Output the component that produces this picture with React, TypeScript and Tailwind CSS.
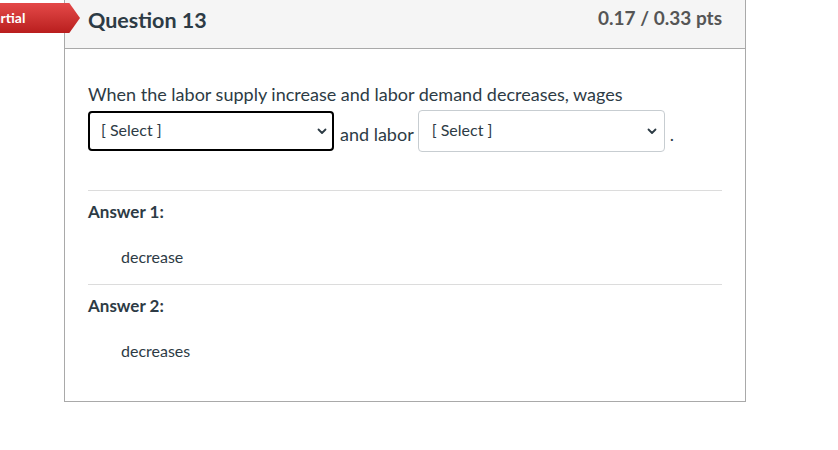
// Quiz question review card · partial credit
const FONT = { fontFamily: "Lato, 'Noto Sans', sans-serif" };

function Chevron() {
  return (
    <svg width="12" height="12" viewBox="0 0 12 12" className="shrink-0">
      <path d="M2.5 4.5 L6 8 L9.5 4.5" fill="none" stroke="#2d3b45" strokeWidth="1.8" strokeLinecap="round" strokeLinejoin="round" />
    </svg>
  );
}

function FakeSelect({ focused }: { focused?: boolean }) {
  return (
    <div
      className={
        focused
          ? "w-[246px] h-[40px] rounded-[4px] border-2 border-black flex items-center justify-between pl-[11px] pr-[4px] bg-white"
          : "w-[247px] h-[42px] rounded-[4px] border border-[#c7cdd1] flex items-center justify-between pl-[13px] pr-[6px] bg-white"
      }
    >
      <span className="text-[16px] text-[#2d3b45] -mt-[3px]">[ Select ]</span>
      <Chevron />
    </div>
  );
}

function AnswerBlock({ label, value }: { label: string; value: string }) {
  return (
    <div className="border-t border-[#dcdcdc] pt-[10px] h-[94px]">
      <p className="text-[17px] font-bold text-[#2d3b45] leading-[22px]">{label}</p>
      <p className="text-[16px] text-[#2d3b45] pl-[33px] mt-[24px] leading-[20px]">{value}</p>
    </div>
  );
}

export default function App() {
  return (
    <div className="relative w-[838px] h-[450px] bg-white overflow-hidden" style={FONT}>
      {/* partial-credit ribbon · left edge cut off */}
      <div
        className="absolute top-[3px] left-[-17px] w-[97px] h-[30px] flex items-center pl-[2px] bg-gradient-to-b from-[#e44848] to-[#b91d1d]"
        style={{ clipPath: "polygon(0 0, 89% 0, 100% 50%, 89% 100%, 0 100%)" }}
      >
        <span className="text-white text-[14px] font-bold leading-none">Partial</span>
      </div>

      <div className="ml-[64px] w-[682px] border-x border-b border-[#a9a9a9]">
        <div className="h-[49px] bg-[#f5f5f5] border-b border-[#a9a9a9] flex items-start justify-between pl-[23px] pr-[23px] pt-[6px]">
          <h2 className="text-[21.5px] font-bold text-[#2d3b45] leading-[28px]">Question 13</h2>
          <span className="text-[19px] font-bold text-[#555555] leading-[24px]">0.17 / 0.33 pts</span>
        </div>

        <div className="px-[23px] pt-[32px] pb-[23px]">
          <p className="text-[18px] text-[#2d3b45] leading-[27px]">
            When the labor supply increase and labor demand decreases, wages
          </p>
          <div className="flex items-center mt-[2px] text-[18px] text-[#2d3b45]">
            <FakeSelect focused />
            <span className="ml-[6px] mr-[4px] mt-[7px]">and labor</span>
            <FakeSelect />
            <span className="ml-[5px] mt-[7px]">.</span>
          </div>

          <div className="mt-[38px]">
            <AnswerBlock label="Answer 1:" value="decrease" />
            <AnswerBlock label="Answer 2:" value="decreases" />
          </div>
        </div>
      </div>
    </div>
  );
}
